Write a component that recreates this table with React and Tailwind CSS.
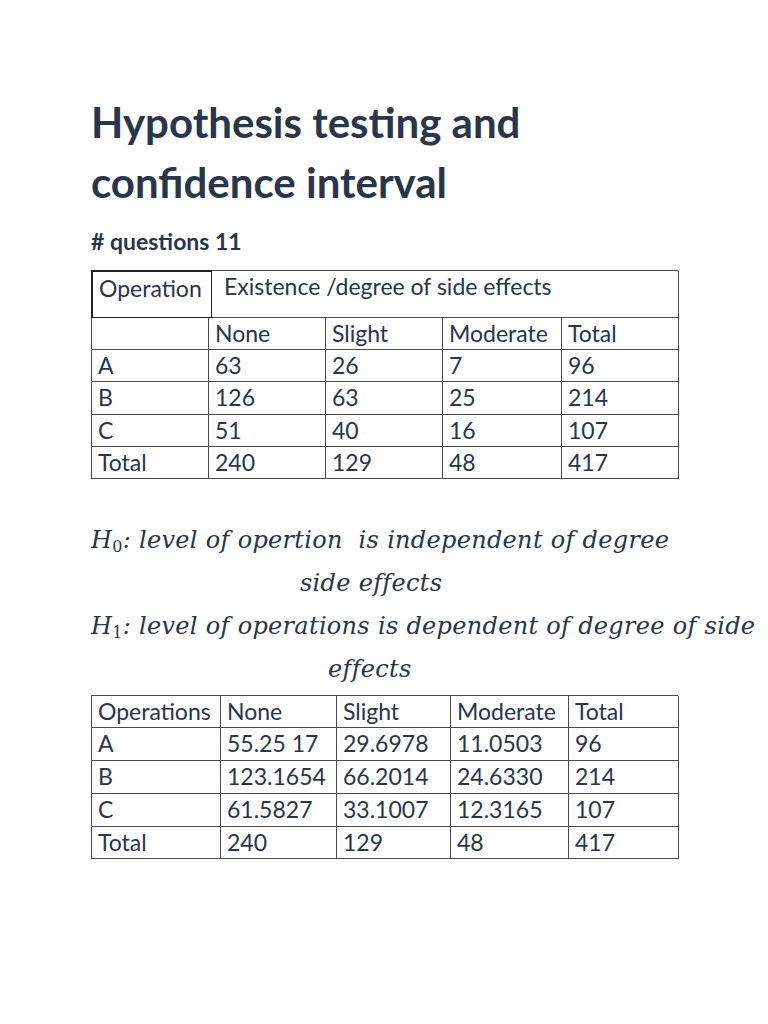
import React from "react";

const counts = [
  ["A", "63", "26", "7", "96"],
  ["B", "126", "63", "25", "214"],
  ["C", "51", "40", "16", "107"],
  ["Total", "240", "129", "48", "417"],
];

const expected = [
  ["Operations", "None", "Slight", "Moderate", "Total"],
  ["A", "55.25 17", "29.6978", "11.0503", "96"],
  ["B", "123.1654", "66.2014", "24.6330", "214"],
  ["C", "61.5827", "33.1007", "12.3165", "107"],
  ["Total", "240", "129", "48", "417"],
];

const cell = "border-r border-b border-[#4a4a4a] pl-[6px] overflow-hidden whitespace-nowrap";

function MathLine({ children, className = "" }) {
  return (
    <div
      className={`h-[43px] leading-[43px] text-[24px] italic whitespace-nowrap tracking-[0.3px] ${className}`}
      style={{ fontFamily: '"DejaVu Serif", "Liberation Serif", serif' }}
    >
      {children}
    </div>
  );
}

export default function App() {
  return (
    <div
      className="min-h-[1024px] w-full bg-white text-[#28354a] pl-[91px] pt-[92px]"
      style={{ fontFamily: 'Lato, "Noto Sans", sans-serif' }}
    >
      {/* ─── Title ─── */}
      <h1 className="text-[42px] font-bold leading-[60px]">
        Hypothesis testing and
        <br />
        confidence interval
      </h1>
      <p className="mt-[14px] text-[23px] font-bold leading-[30px]">
        # questions 11
      </p>

      {/* ─── Observed counts ─── */}
      <div className="mt-[14px] w-[587px] border-l border-t border-[#4a4a4a] text-[23px] leading-[30px]">
        <div className="grid h-[47px] grid-cols-[120px_467px]">
          <div className="border-r border-b border-l-2 border-t-2 border-[#222] -ml-px -mt-px pl-[6px] pt-[1px]">
            Operation
          </div>
          <div className={`${cell} pl-[12px]`}>Existence /degree of side effects</div>
        </div>
        <div className="grid h-[32px] grid-cols-[117px_117px_117px_119px_117px]">
          <div className={cell}></div>
          <div className={cell}>None</div>
          <div className={cell}>Slight</div>
          <div className={cell}>Moderate</div>
          <div className={cell}>Total</div>
        </div>
        {counts.map((row, i) => (
          <div
            key={row[0]}
            className={`grid grid-cols-[117px_117px_117px_119px_117px] ${i === 1 ? "h-[33px]" : "h-[32px]"}`}
          >
            {row.map((v, j) => (
              <div key={j} className={cell}>
                {v}
              </div>
            ))}
          </div>
        ))}
      </div>

      {/* ─── Hypotheses ─── */}
      <div className="mt-[40px]">
        <MathLine>
          H<sub className="not-italic text-[16px]">0</sub>: level of opertion&nbsp; is independent of degree
        </MathLine>
        <MathLine className="pl-[209px]">side effects</MathLine>
        <MathLine>
          H<sub className="not-italic text-[16px]">1</sub>: level of operations is dependent of degree of side
        </MathLine>
        <MathLine className="pl-[237px]">effects</MathLine>
      </div>

      {/* ─── Expected counts ─── */}
      <div className="mt-[4px] w-[587px] border-l border-t border-[#4a4a4a] text-[23px] leading-[30px]">
        {expected.map((row, i) => (
          <div
            key={row[0]}
            className={`grid grid-cols-[129px_116px_114px_118px_110px] ${i === 0 || i === 4 ? "h-[32px]" : "h-[33px]"}`}
          >
            {row.map((v, j) => (
              <div key={j} className={cell}>
                {v}
              </div>
            ))}
          </div>
        ))}
      </div>
    </div>
  );
}
